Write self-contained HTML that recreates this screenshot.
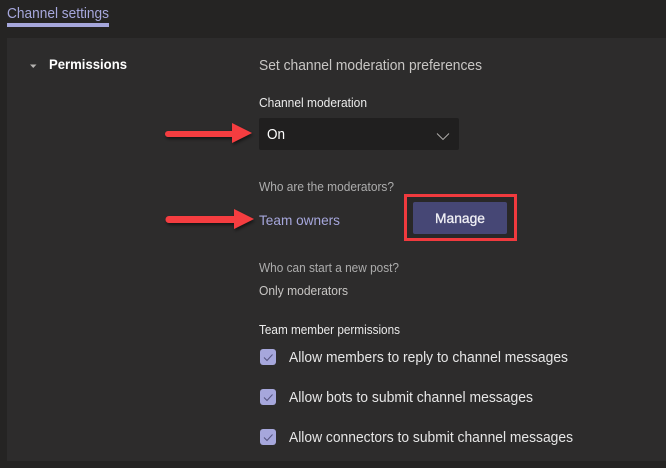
<!DOCTYPE html>
<html>
<head>
<meta charset="utf-8">
<style>
html,body{margin:0;padding:0;background:#252423;width:666px;height:468px;overflow:hidden}
svg{display:block}
text{font-family:"Liberation Sans",sans-serif}
</style>
</head>
<body>
<svg width="666" height="468" viewBox="0 0 666 468" xmlns="http://www.w3.org/2000/svg">
<defs>
<filter id="s" x="-20%" y="-50%" width="140%" height="220%">
<feDropShadow dx="1" dy="2" stdDeviation="1.5" flood-color="#000" flood-opacity=".55"/>
</filter>
</defs>
<rect width="666" height="468" fill="#252423"/>
<rect x="7" y="38" width="659" height="423" fill="#2d2c2c"/>
<text x="7" y="18" font-size="15" fill="#a6a7dc" textLength="102" lengthAdjust="spacingAndGlyphs">Channel settings</text>
<rect x="7" y="23" width="102" height="4" fill="#a6a7dc"/>
<path d="M30 64.500H36.500L33.250 68Z" fill="#b5b3b1"/>
<text x="49" y="69" font-size="14" font-weight="bold" fill="#fff" textLength="78" lengthAdjust="spacingAndGlyphs">Permissions</text>
<text x="259" y="70" font-size="14.500" fill="#c8c6c4" textLength="223" lengthAdjust="spacingAndGlyphs">Set channel moderation preferences</text>
<text x="259" y="107" font-size="12.500" fill="#ebebeb" textLength="108" lengthAdjust="spacingAndGlyphs">Channel moderation</text>
<rect x="259" y="118" width="200" height="32" rx="2" fill="#201f1f"/>
<text x="267" y="139" font-size="15" fill="#fff" textLength="18" lengthAdjust="spacingAndGlyphs">On</text>
<path d="M437 133.500L443 139.500L449 133.500" fill="none" stroke="#b5b3b1" stroke-width="0.900"/>
<text x="259" y="191" font-size="13" fill="#adadad" textLength="135" lengthAdjust="spacingAndGlyphs">Who are the moderators?</text>
<text x="259" y="225" font-size="14" fill="#a6a7dc" textLength="81" lengthAdjust="spacingAndGlyphs">Team owners</text>
<rect x="405.500" y="195.500" width="110" height="44" fill="#292828" stroke="#f03a3e" stroke-width="3"/>
<rect x="413" y="202" width="94" height="32" rx="2" fill="#464775"/>
<text x="435" y="223" font-size="14" fill="#f0f0f5" stroke="#f0f0f5" stroke-width="0.300" textLength="50" lengthAdjust="spacingAndGlyphs">Manage</text>
<text x="259" y="272" font-size="13" fill="#adadad" textLength="140" lengthAdjust="spacingAndGlyphs">Who can start a new post?</text>
<text x="259" y="295" font-size="13" fill="#c8c6c4" textLength="89" lengthAdjust="spacingAndGlyphs">Only moderators</text>
<text x="259" y="334" font-size="12.500" fill="#ebebeb" textLength="141" lengthAdjust="spacingAndGlyphs">Team member permissions</text>
<g filter="url(#s)" fill="#f53d40">
<path d="M168 131H232V123L252 133L232 143V137H168A3 3 0 0 1 168 131Z"/>
<path d="M169 216H234V209L254 219L234 229V223H169A3.500 3.500 0 0 1 169 216Z"/>
</g>
<g fill="#a6a7dc">
<rect x="260" y="349" width="16" height="16" rx="3"/>
<rect x="260" y="389" width="16" height="16" rx="3"/>
<rect x="260" y="429" width="16" height="16" rx="3"/>
</g>
<g fill="none" stroke="#55547f" stroke-width="1">
<path d="M264 357.500L267 360.500L272.500 354.500"/>
<path d="M264 397.500L267 400.500L272.500 394.500"/>
<path d="M264 437.500L267 440.500L272.500 434.500"/>
</g>
<text x="289" y="362" font-size="15" fill="#e6e6e6" textLength="279" lengthAdjust="spacingAndGlyphs">Allow members to reply to channel messages</text>
<text x="289" y="402" font-size="15" fill="#e6e6e6" textLength="244" lengthAdjust="spacingAndGlyphs">Allow bots to submit channel messages</text>
<text x="289" y="442" font-size="15" fill="#e6e6e6" textLength="284" lengthAdjust="spacingAndGlyphs">Allow connectors to submit channel messages</text>
</svg>
</body>
</html>
